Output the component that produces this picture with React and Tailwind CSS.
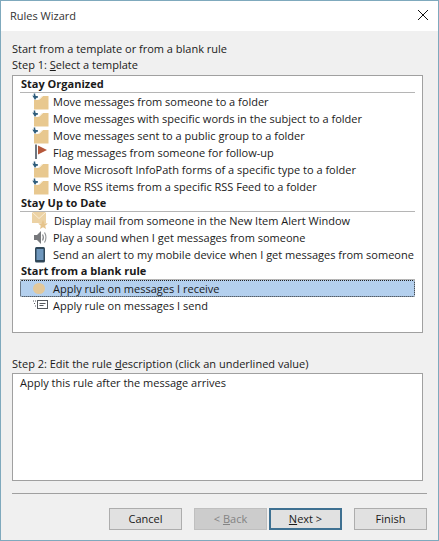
const FolderIcon = () => (
  <svg width="17" height="17" viewBox="0 0 17 17" className="shrink-0">
    <path d="M2 6.500h5.500L11 3h5.500v13.500H2z" fill="#e8c88f" />
    <path d="M7 6.500l3.500-3.500" fill="none" stroke="#f6e8cd" strokeWidth="1" />
    <path d="M0 0h6.500v7H0z" fill="#fff" opacity="0.8" />
    <path d="M2.500 0.500v1.800c0 1 .8 1.700 3.500 1.700" fill="none" stroke="#2f5d7c" strokeWidth="1.500" />
    <path d="M0.300 2.500l2.700 4.500 2.500-3.500z" fill="#2f5d7c" />
  </svg>
);

const FlagIcon = () => (
  <svg width="17" height="17" viewBox="0 0 17 17" className="shrink-0">
    <rect x="3" y="0.500" width="2" height="14.500" fill="#6f7780" />
    <path d="M6 1.500l9 4.500-9 4.500z" fill="#b5573a" />
  </svg>
);

const MailStarIcon = () => (
  <svg width="18" height="18" viewBox="0 0 18 18" className="shrink-0">
    <path d="M0 0h14v11H0z" fill="#ecd2a4" />
    <path d="M0 0l7 6.500L14 0" fill="none" stroke="#f8ecd6" strokeWidth="1" />
    <path d="M11 8l1.400 3.200 3.400.3-2.600 2.200.8 3.300-3-1.800-3 1.800.8-3.300-2.600-2.200 3.400-.3z" fill="#e6c48c" />
  </svg>
);

const SoundIcon = () => (
  <svg width="17" height="17" viewBox="0 0 17 17" className="shrink-0">
    <path d="M2 6h3l4-4v13l-4-4H2z" fill="#77797c" />
    <path d="M10.500 5.500c1 1.600 1 4.400 0 6M12.500 3.500c1.800 2.800 1.800 7.200 0 10" fill="none" stroke="#8b8d90" strokeWidth="1.200" />
  </svg>
);

const PhoneIcon = () => (
  <svg width="17" height="17" viewBox="0 0 17 17" className="shrink-0">
    <rect x="3" y="1" width="10" height="15.500" rx="1.500" fill="#2f4658" />
    <rect x="4.500" y="3" width="7" height="11" fill="#6f97bd" />
  </svg>
);

const BlobIcon = () => (
  <svg width="17" height="17" viewBox="0 0 17 17" className="shrink-0">
    <ellipse cx="7" cy="8.500" rx="6" ry="5.500" fill="#e3c89a" />
  </svg>
);

const SendIcon = () => (
  <svg width="17" height="17" viewBox="0 0 17 17" className="shrink-0">
    <rect x="5.500" y="3.500" width="10" height="8" fill="#fff" stroke="#55595e" />
    <path d="M7.500 6.500h6M7.500 8.500h4" stroke="#55595e" strokeWidth="1" />
    <path d="M1 4h3M2 6.500h2M3 9h1" stroke="#55595e" strokeWidth="1" strokeDasharray="1 1" />
  </svg>
);

const groups = [
  {
    title: "Stay Organized",
    rows: [
      [FolderIcon, "Move messages from someone to a folder"],
      [FolderIcon, "Move messages with specific words in the subject to a folder"],
      [FolderIcon, "Move messages sent to a public group to a folder"],
      [FlagIcon, "Flag messages from someone for follow-up"],
      [FolderIcon, "Move Microsoft InfoPath forms of a specific type to a folder"],
      [FolderIcon, "Move RSS items from a specific RSS Feed to a folder"],
    ],
  },
  {
    title: "Stay Up to Date",
    rows: [
      [MailStarIcon, "Display mail from someone in the New Item Alert Window"],
      [SoundIcon, "Play a sound when I get messages from someone"],
      [PhoneIcon, "Send an alert to my mobile device when I get messages from someone"],
    ],
  },
  {
    title: "Start from a blank rule",
    rows: [
      [BlobIcon, "Apply rule on messages I receive", true],
      [SendIcon, "Apply rule on messages I send"],
    ],
  },
];

const Button = ({ children, className }) => (
  <button className={`w-[73px] h-[22px] border text-[11px] ${className}`}>{children}</button>
);

const App = () => {
  return (
    <div
      className="w-[439px] h-[541px] flex flex-col bg-[#f0f0f0] border border-[#7fa9bd] text-[#1a1a1a] text-[11px]"
      style={{ fontFamily: '"Open Sans", sans-serif' }}
    >
      {/* Title bar */}
      <div className="h-[30px] bg-white flex items-center justify-between pl-[9px] pr-[9px] shrink-0">
        <span className="text-[11px] text-[#333]">Rules Wizard</span>
        <svg width="12" height="12" viewBox="0 0 12 12" className="mb-[2px]">
          <path d="M1 1l10 10M11 1L1 11" stroke="#111" strokeWidth="1" />
        </svg>
      </div>

      <div className="flex-1 flex flex-col px-[11px] pt-[9px]">
        <div className="h-[17px] leading-[17px]">Start from a template or from a blank rule</div>
        <div className="h-[16px] leading-[16px]">
          Step 1: <span className="underline">S</span>elect a template
        </div>

        {/* Template list */}
        <div className="mt-[2px] mr-[4px] h-[258px] bg-white border border-[#a0a0a0] pl-[7px] pr-[7px]">
          {groups.map((group) => (
            <div key={group.title}>
              <div className="h-[16px] leading-[16px] pl-[1px] font-bold border-b border-[#b5b5b5] box-content">
                {group.title}
              </div>
              {group.rows.map(([Icon, label, selected]) => (
                <div
                  key={label}
                  className={`h-[17px] flex items-center gap-[4px] pl-[12px] whitespace-nowrap ${
                    selected ? "bg-[#b4d0ee] rounded-[2px] outline-1 outline-dotted outline-[#222] -outline-offset-1" : ""
                  }`}
                >
                  <Icon />
                  <span className="pt-[2px]">{label}</span>
                </div>
              ))}
            </div>
          ))}
        </div>

        <div className="mt-[23px] h-[16px] leading-[16px]">
          Step 2: Edit the rule <span className="underline">d</span>escription (click an underlined value)
        </div>
        <div className="mt-[1px] mr-[4px] h-[108px] bg-white border border-[#a0a0a0] px-[7px] py-[1px] leading-[16px]">
          Apply this rule after the message arrives
        </div>

        <div className="mt-[12px] border-t border-[#a0a0a0]" />

        <div className="mt-[14px] flex justify-end">
          <Button className="bg-[#e1e1e1] border-[#adadad]">Cancel</Button>
          <Button className="ml-[12px] bg-[#cccccc] border-[#bfbfbf] text-[#838383]">
            &lt; <span className="underline">B</span>ack
          </Button>
          <Button className="ml-[2px] bg-[#e1e1e1] border-2 border-[#3f7192]">
            <span className="underline">N</span>ext &gt;
          </Button>
          <Button className="ml-[12px] bg-[#e1e1e1] border-[#adadad]">Finish</Button>
        </div>
      </div>
    </div>
  );
};

export default App;
